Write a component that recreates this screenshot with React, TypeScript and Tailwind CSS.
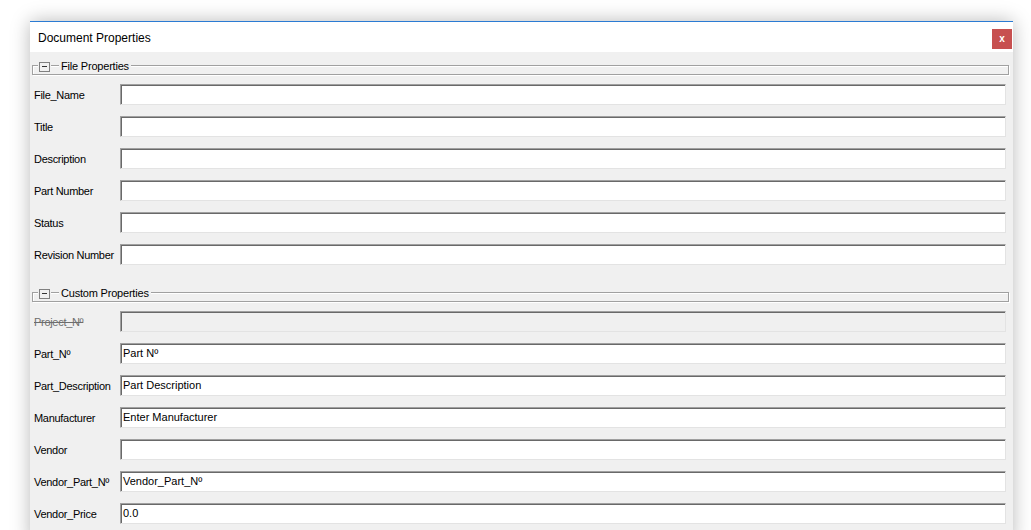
import React from "react"

interface Field {
  label: string
  value?: string
  disabled?: boolean
}

const fileFields: Field[] = [
  { label: "File_Name" },
  { label: "Title" },
  { label: "Description" },
  { label: "Part Number" },
  { label: "Status" },
  { label: "Revision Number" },
]

const customFields: Field[] = [
  { label: "Project_Nº", disabled: true },
  { label: "Part_Nº", value: "Part Nº" },
  { label: "Part_Description", value: "Part Description" },
  { label: "Manufacturer", value: "Enter Manufacturer" },
  { label: "Vendor" },
  { label: "Vendor_Part_Nº", value: "Vendor_Part_Nº" },
  { label: "Vendor_Price", value: "0.0" },
]

function GroupHeader({ title, className }: { title: string; className?: string }) {
  return (
    <div className={"relative ml-[2px] mr-[4px] h-[10px] border border-[#a0a0a0] shadow-[inset_1px_1px_0_#ffffff,1px_1px_0_#ffffff] " + (className ?? "")}>
      <div className="absolute left-[5px] top-[-6px] flex items-center">
        <div className="bg-[#f0f0f0] px-[1px]">
          <div className="flex h-[10px] w-[11px] items-center justify-center border border-[#808080] bg-[#f0f0f0]">
            <div className="h-px w-[5px] bg-[#333]" />
          </div>
        </div>
        <span className="ml-[8px] bg-[#f0f0f0] px-[2px] text-[11px] leading-[13px] tracking-[-0.2px] text-black">{title}</span>
      </div>
    </div>
  )
}

function FieldRow({ label, value, disabled }: Field) {
  return (
    <div className="flex h-[21px] items-center pr-[7px]">
      <div
        className={
          "w-[90px] shrink-0 pt-[2px] pl-[4px] text-[11px] tracking-[-0.3px] " +
          (disabled ? "text-[#6d6d6d] line-through" : "text-black")
        }
      >
        {label}
      </div>
      <div
        className={
          "flex h-[21px] flex-1 items-center border border-t-[#a0a0a0] border-l-[#a0a0a0] border-r-[#e3e3e3] border-b-[#e3e3e3] pl-[2px] text-[11px] text-black shadow-[inset_1px_1px_0_#696969] " +
          (disabled ? "bg-[#f0f0f0]" : "bg-white")
        }
      >
        {value}
      </div>
    </div>
  )
}

export default function App() {
  return (
    <div className="h-[530px] w-full overflow-hidden bg-white pl-[30px] pt-[21px] font-['Liberation_Sans',Arial,sans-serif]">
      <div className="w-[983px] border-t border-[#2b7bd3] bg-[#f0f0f0] shadow-[0_0_18px_rgba(0,0,0,0.28)]">
        <div className="flex h-[30px] items-start justify-between bg-white pl-[8px] pr-[1px]">
          <span className="mt-[7px] text-[12px] text-black">Document Properties</span>
          <button className="mt-[7px] flex h-[20px] w-[20px] items-center justify-center bg-[#c75050] text-[10px] font-bold leading-none text-white">
            x
          </button>
        </div>

        <div className="pt-[13px] pb-[20px]">
          <GroupHeader title="File Properties" />
          <div className="mt-[9px] flex flex-col gap-[11px]">
            {fileFields.map((f) => (
              <FieldRow key={f.label} {...f} />
            ))}
          </div>

          <GroupHeader title="Custom Properties" className="mt-[27px]" />
          <div className="mt-[9px] flex flex-col gap-[11px]">
            {customFields.map((f) => (
              <FieldRow key={f.label} {...f} />
            ))}
          </div>
        </div>
      </div>
    </div>
  )
}
